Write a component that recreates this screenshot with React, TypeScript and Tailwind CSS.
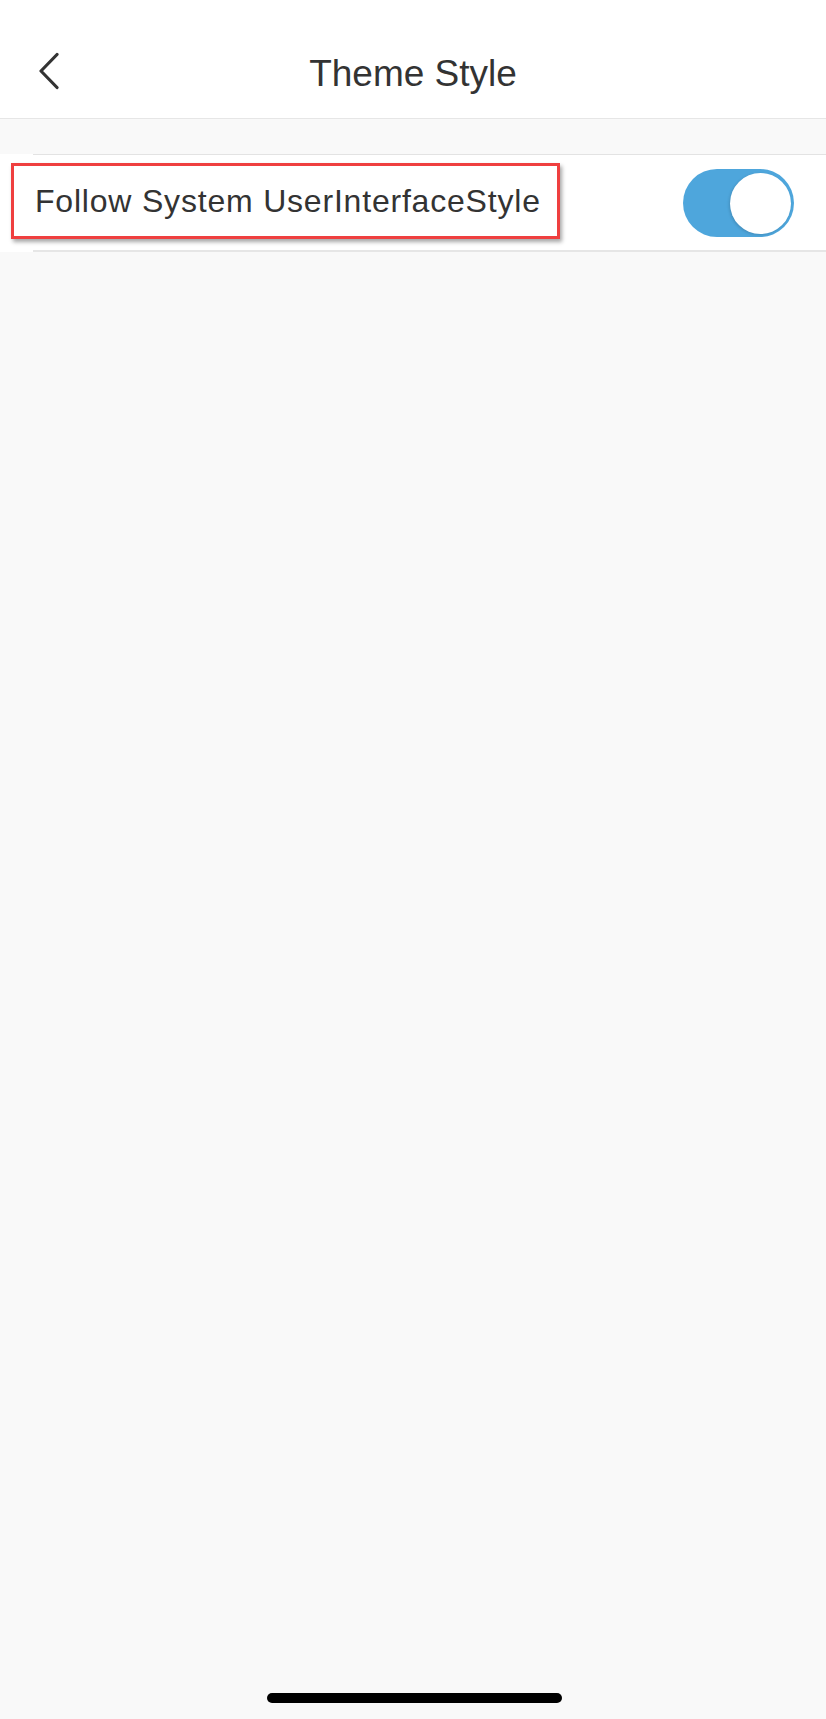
export default function App() {
  return (
    <div
      className="relative w-[826px] h-[1719px] bg-[#f9f9f9] overflow-hidden"
      style={{ fontFamily: '"Liberation Sans", Arial, sans-serif' }}
    >
      {/* nav bar */}
      <div className="relative h-[119px] bg-white border-b border-[#e6e6e6] flex items-end justify-center pb-[22px]">
        <button className="absolute left-[36px] top-[52px] w-[24px] h-[38px] flex items-center justify-center">
          <svg width="22" height="38" viewBox="0 0 22 38" fill="none">
            <path d="M20 2.5 L4 19 L20 35.5" stroke="#333333" strokeWidth="3.2" strokeLinecap="round" strokeLinejoin="round" />
          </svg>
        </button>
        <h1 className="text-[37px] leading-[44px] text-[#333333]">Theme Style</h1>
      </div>

      {/* gap */}
      <div className="h-[35px]" />

      {/* setting row */}
      <div className="relative bg-white h-[98px] flex items-center justify-between pl-[11px] pr-[32px]">
        <div className="absolute left-[33px] right-0 top-0 h-px bg-[#e3e3e3]" />
        <div className="absolute left-[33px] right-0 bottom-0 h-[2px] bg-[#e6e6e6]" />
        <div className="h-[76px] w-[549px] border-[3px] border-[#ef3f3f] shadow-[2px_3px_4px_rgba(0,0,0,0.35)] flex items-center pl-[21px] -mt-[5px]">
          <span className="text-[32px] tracking-[0.8px] text-[#333333] leading-none">Follow System UserInterfaceStyle</span>
        </div>
        <div className="w-[111px] h-[68px] rounded-full bg-[#4ea6dc] flex items-center justify-end pr-[3px]">
          <div className="w-[61px] h-[61px] rounded-full bg-white shadow-[-1px_1px_3px_rgba(0,0,0,0.15)]" />
        </div>
      </div>

      {/* home indicator */}
      <div className="absolute left-[267px] top-[1693px] w-[295px] h-[10px] rounded-full bg-black" />
    </div>
  )
}
